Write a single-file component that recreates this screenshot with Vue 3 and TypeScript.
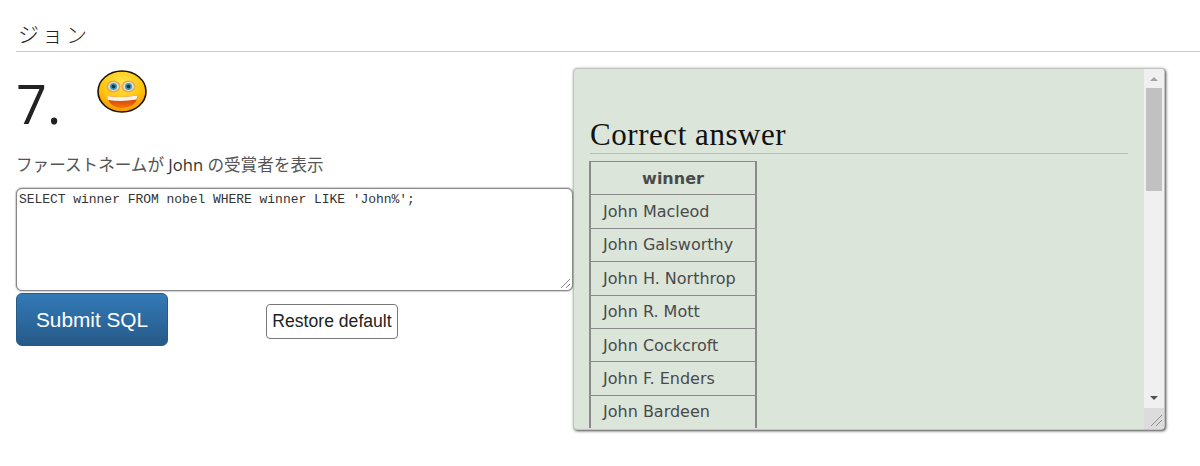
<template>
  <div class="page">
    <div class="title">ジョン</div>

    <div class="row">
      <div class="left">
        <div class="num-line">
          <span class="num">7.</span>
          <svg class="smiley" width="52" height="46" viewBox="0 0 52 46">
            <defs>
              <radialGradient id="face" cx="50%" cy="30%" r="72%">
                <stop offset="0" stop-color="#ffe650" />
                <stop offset="0.6" stop-color="#ffc40c" />
                <stop offset="1" stop-color="#f59100" />
              </radialGradient>
              <linearGradient id="mouth" x1="0" y1="0" x2="0" y2="1">
                <stop offset="0" stop-color="#c2300a" />
                <stop offset="1" stop-color="#f9730c" />
              </linearGradient>
            </defs>
            <ellipse cx="26" cy="22.5" rx="24" ry="20.5" fill="url(#face)" stroke="#1a1408" stroke-width="1.6" />
            <ellipse cx="17.5" cy="17.5" rx="7" ry="6" fill="#f0a648" />
            <ellipse cx="32.5" cy="17.5" rx="7" ry="6" fill="#f0a648" />
            <ellipse cx="17.5" cy="17.5" rx="5.4" ry="4.4" fill="#d9e6de" />
            <ellipse cx="32.5" cy="17.5" rx="5.4" ry="4.4" fill="#d9e6de" />
            <circle cx="17.5" cy="17.5" r="3.6" fill="#3f9cc0" />
            <circle cx="32.5" cy="17.5" r="3.6" fill="#3f9cc0" />
            <circle cx="17.5" cy="17.5" r="2" fill="#1c3540" />
            <circle cx="32.5" cy="17.5" r="2" fill="#1c3540" />
            <path d="M11 27 Q26 29 41.5 26.5 Q41 38 26 39 Q13 38.5 11 27 Z" fill="url(#mouth)" />
            <path d="M11 27 Q26 29 41.5 26.5 L40.5 30.5 Q26 33 12 31 Z" fill="#f8f3ea" />
          </svg>
        </div>
        <p class="question">ファーストネームが <span class="hl">John</span> の受賞者を表示</p>
        <div class="editor">
          <div class="sql">SELECT winner FROM nobel WHERE winner LIKE 'John%';</div>
          <svg class="grip" width="11" height="11" viewBox="0 0 11 11">
            <path d="M1 10 L10 1 M6 10 L10 6" stroke="#8a8a8a" stroke-width="1" fill="none" />
          </svg>
        </div>
        <div class="buttons">
          <button class="submit">Submit SQL</button>
          <button class="restore">Restore default</button>
        </div>
      </div>

      <div class="answer">
        <div class="answer-body">
          <h2>Correct answer</h2>
          <table>
            <thead>
              <tr><th>winner</th></tr>
            </thead>
            <tbody>
              <tr v-for="w in winners" :key="w"><td>{{ w }}</td></tr>
            </tbody>
          </table>
        </div>
        <div class="scrollbar">
          <div class="arrow up"></div>
          <div class="track"><div class="thumb"></div></div>
          <div class="arrow down"></div>
          <div class="corner">
            <svg width="20" height="20" viewBox="0 0 20 20">
              <path d="M7 18 L18 7 M12 18 L18 12" stroke="#8f8f8f" stroke-width="1" fill="none" />
            </svg>
          </div>
        </div>
      </div>
    </div>
  </div>
</template>

<script setup lang="ts">
const winners: string[] = [
  'John Macleod',
  'John Galsworthy',
  'John H. Northrop',
  'John R. Mott',
  'John Cockcroft',
  'John F. Enders',
  'John Bardeen',
]
</script>

<style>
html,
body {
  margin: 0;
  background: #fff;
}
</style>

<style scoped>
.page {
  height: 466px;
  overflow: hidden;
  padding-left: 16px;
  font-family: 'DejaVu Sans', 'Noto Sans CJK JP', sans-serif;
  color: #333;
  box-sizing: border-box;
}

.title {
  height: 52px;
  box-sizing: border-box;
  padding: 20px 0 0 2px;
  font-size: 21px;
  line-height: 26px;
  letter-spacing: 3px;
  color: #222;
  border-bottom: 1px solid #c8c8d0;
  font-family: 'Noto Sans CJK JP', sans-serif;
  font-weight: 300;
}

.row {
  display: flex;
  align-items: flex-start;
}

.left {
  width: 557px;
  flex: none;
}

.num-line {
  height: 68px;
  display: flex;
  align-items: flex-start;
}

.num {
  font-family: 'Open Sans', sans-serif;
  font-size: 54px;
  line-height: 60px;
  margin-top: 21px;
  color: #222;
  width: 80px;
}

.smiley {
  margin-top: 17px;
}

.question {
  margin: 33px 0 0;
  font-family: 'Open Sans', 'Noto Sans CJK JP', sans-serif;
  font-size: 16.6px;
  line-height: 24px;
  color: #555;
}

.hl {
  color: #333;
}

.editor {
  position: relative;
  margin-top: 11px;
  height: 103px;
  box-sizing: border-box;
  border: 1px solid #888;
  border-radius: 6px;
  box-shadow: 0 0 2px #666;
  background: #fff;
  padding: 3px 2px;
}

.sql {
  font-family: 'Liberation Mono', monospace;
  font-size: 13px;
  line-height: 15px;
  color: #333;
  letter-spacing: -0.04px;
}

.grip {
  position: absolute;
  right: 1px;
  bottom: 1px;
}

.buttons {
  display: flex;
  align-items: flex-start;
  margin-top: 2px;
}

.submit {
  width: 152px;
  height: 53px;
  border: 1px solid #265a88;
  border-radius: 6px;
  background: linear-gradient(#337ab7, #265a88);
  color: #fff;
  font-family: 'Liberation Sans', sans-serif;
  font-size: 20.8px;
  padding: 0;
}

.restore {
  margin: 11px 0 0 98px;
  width: 132px;
  height: 35px;
  background: #fff;
  border: 1px solid #777;
  border-radius: 4px;
  color: #222;
  font-family: 'Liberation Sans', sans-serif;
  font-size: 17.6px;
  padding: 0;
}

.answer {
  margin-top: 16px;
  width: 592px;
  height: 362px;
  flex: none;
  box-sizing: border-box;
  display: flex;
  background: #dbe5da;
  border: 1px solid #c2c2c2;
  border-radius: 4px;
  box-shadow: 1px 1px 3px #444;
  overflow: hidden;
}

.answer-body {
  flex: 1;
  min-width: 0;
  padding: 48px 16px 0;
  margin-bottom: 1px;
  overflow: hidden;
}

h2 {
  margin: 0 0 7px;
  font-family: 'Liberation Serif', serif;
  font-weight: 400;
  font-size: 31px;
  line-height: 36px;
  letter-spacing: 0.55px;
  color: #111;
  border-bottom: 1px solid #bbb;
}

table {
  border-collapse: collapse;
  width: 168px;
  margin-left: -1px;
  font-size: 16px;
  color: #4a4a4a;
}

th,
td {
  border: 2px solid #8a8a8a;
  border-width: 1px 2px;
  height: 33.4px;
  padding: 0 12px;
  box-sizing: border-box;
}

th {
  font-weight: 700;
  text-align: center;
}

td {
  text-align: left;
}

.scrollbar {
  width: 20px;
  flex: none;
  display: flex;
  flex-direction: column;
  background: #f0f0f0;
}

.arrow {
  flex: none;
  display: flex;
  align-items: center;
  justify-content: center;
}

.arrow::before {
  content: '';
  border-left: 4px solid transparent;
  border-right: 4px solid transparent;
}

.up {
  height: 19px;
}

.up::before {
  border-bottom: 4px solid #a3a3a3;
}

.down {
  height: 20px;
}

.down::before {
  border-top: 4px solid #505050;
}

.track {
  flex: 1;
  padding: 0 2px;
}

.thumb {
  height: 103px;
  background: #c1c1c1;
}

.corner {
  height: 21px;
  flex: none;
  background: #dcdcdc;
  overflow: hidden;
}
</style>
